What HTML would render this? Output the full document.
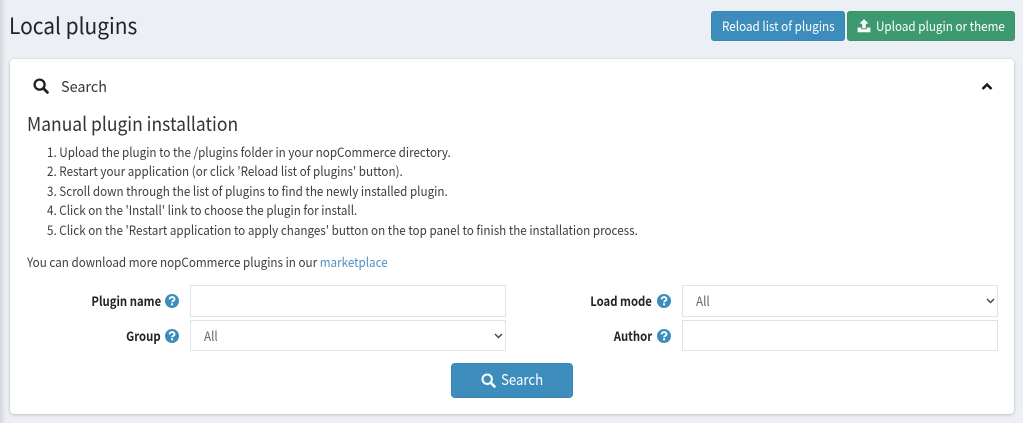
<!DOCTYPE html>
<html>
<head>
<meta charset="utf-8">
<style>
*{box-sizing:border-box;margin:0;padding:0}
html,body{width:1023px;height:423px;overflow:hidden}
body{position:relative;background:#ecf0f5;font-family:"Noto Sans CJK SC","Liberation Sans",sans-serif;color:#212529}
.shade{position:absolute;left:0;top:0;width:6px;height:423px;background:linear-gradient(to right,#d3d6da,#ecf0f5)}
.t{position:absolute;white-space:nowrap;line-height:20px;transform-origin:0 50%}
.btn{position:absolute;border-radius:3px;color:#fff;font-size:13px;line-height:20px;white-space:nowrap}
.btn span{display:inline-block;transform:scaleX(.898);transform-origin:0 50%}
.card{position:absolute;left:10px;top:59px;width:1004px;height:355px;background:#fff;border-radius:4px;box-shadow:0 0 1px rgba(0,0,0,.125),0 1px 3px rgba(0,0,0,.2)}
.f{position:absolute;background:#fff;border:1px solid #dfe2e8;height:32px}
.v{position:absolute;left:13px;top:5px;font-size:13px;line-height:20px;color:#60666c;transform:scaleX(.9);transform-origin:0 50%}
.lb{position:absolute;font-size:13px;font-weight:700;line-height:20px;text-align:right;white-space:nowrap;color:#212529;transform:scaleX(.87);transform-origin:100% 50%}
svg{position:absolute;display:block}
a{color:#3c8dbc;text-decoration:none}
.li{font-size:13px;color:#3a3f44;transform:scaleX(.896)}
</style>
</head>
<body>
<div class="shade"></div>
<div class="t" style="left:9px;top:10px;font-size:22.5px;line-height:30px;color:#212529;transform:scaleX(.93)">Local plugins</div>

<div class="btn" style="left:711px;top:11px;width:134px;height:30px;background:#3c8dbc;border:1px solid #3a87b5;padding:4px 0 0 10px"><span>Reload list of plugins</span></div>
<div class="btn" style="left:847px;top:11px;width:168px;height:30px;background:#3d9970;border:1px solid #3a9269;padding:4px 0 0 28px"><span>Upload plugin or theme</span>
<svg style="left:9px;top:7px" width="14" height="14" viewBox="0 0 14 14"><path fill="#fff" d="M7 0L11.5 4.6H8.8V9.2H5.2V4.6H2.5Z"/><path fill="#fff" d="M0.6 8.6H4.2V10.3H9.800V8.6H13.4V13.2H0.6Z"/></svg></div>

<div class="card"></div>

<svg style="left:33px;top:78px" width="16" height="16" viewBox="0 0 16 16"><circle cx="6.6" cy="6.6" r="5" fill="none" stroke="#1d2125" stroke-width="2.3"/><path d="M10.4 10.4L14.4 14.4" stroke="#1d2125" stroke-width="2.8" stroke-linecap="round"/></svg>
<div class="t" style="left:61px;top:77px;font-size:15px;color:#33383d;transform:scaleX(.96)">Search</div>
<svg style="left:981px;top:82px" width="12" height="9" viewBox="0 0 12 9"><path d="M1.5 7L6 2.5L10.500 7" fill="none" stroke="#15191d" stroke-width="2.5"/></svg>

<div class="t" style="left:26.500px;top:111px;font-size:19px;line-height:26px;color:#2f3439;transform:scaleX(.92)">Manual plugin installation</div>

<div class="t li" style="left:47px;top:142px">1. Upload the plugin to the /plugins folder in your nopCommerce directory.</div>
<div class="t li" style="left:47px;top:161px">2. Restart your application (or click 'Reload list of plugins' button).</div>
<div class="t li" style="left:47px;top:181px">3. Scroll down through the list of plugins to find the newly installed plugin.</div>
<div class="t li" style="left:47px;top:200px">4. Click on the 'Install' link to choose the plugin for install.</div>
<div class="t li" style="left:47px;top:220px">5. Click on the 'Restart application to apply changes' button on the top panel to finish the installation process.</div>
<div class="t li" style="left:27px;top:252px">You can download more nopCommerce plugins in our <a href="#" style="color:#4f93c4">marketplace</a></div>

<div class="lb" style="right:862px;top:291px">Plugin name</div>
<svg style="left:165px;top:294px" width="14" height="14" viewBox="0 0 14 14"><circle cx="7" cy="7" r="7" fill="#3c8dbc"/><path d="M4.600 5.400C4.600 4 5.700 3.100 7.100 3.100C8.500 3.100 9.500 4 9.500 5.200C9.500 6.800 7.100 6.800 7.100 8.300" fill="none" stroke="#fff" stroke-width="1.900"/><rect x="6.100" y="9.300" width="2" height="2" fill="#fff"/></svg>
<div class="f" style="left:190px;top:285px;width:316px"></div>

<div class="lb" style="right:862px;top:326px">Group</div>
<svg style="left:165px;top:329px" width="14" height="14" viewBox="0 0 14 14"><circle cx="7" cy="7" r="7" fill="#3c8dbc"/><path d="M4.600 5.400C4.600 4 5.700 3.100 7.100 3.100C8.500 3.100 9.500 4 9.500 5.200C9.500 6.800 7.100 6.800 7.100 8.300" fill="none" stroke="#fff" stroke-width="1.900"/><rect x="6.100" y="9.300" width="2" height="2" fill="#fff"/></svg>
<div class="f" style="left:190px;top:320px;width:316px;height:31px"><span class="v">All</span>
<svg style="left:303px;top:12px" width="9" height="6" viewBox="0 0 9 6"><path d="M1 1L4.500 4.500L8 1" fill="none" stroke="#3d4248" stroke-width="1.400"/></svg></div>

<div class="lb" style="right:371px;top:291px">Load mode</div>
<svg style="left:657px;top:294px" width="14" height="14" viewBox="0 0 14 14"><circle cx="7" cy="7" r="7" fill="#3c8dbc"/><path d="M4.600 5.400C4.600 4 5.700 3.100 7.100 3.100C8.500 3.100 9.500 4 9.500 5.200C9.500 6.800 7.100 6.800 7.100 8.300" fill="none" stroke="#fff" stroke-width="1.900"/><rect x="6.100" y="9.300" width="2" height="2" fill="#fff"/></svg>
<div class="f" style="left:682px;top:285px;width:316px"><span class="v">All</span>
<svg style="left:303px;top:12px" width="9" height="6" viewBox="0 0 9 6"><path d="M1 1L4.500 4.500L8 1" fill="none" stroke="#3d4248" stroke-width="1.400"/></svg></div>

<div class="lb" style="right:371px;top:326px">Author</div>
<svg style="left:657px;top:329px" width="14" height="14" viewBox="0 0 14 14"><circle cx="7" cy="7" r="7" fill="#3c8dbc"/><path d="M4.600 5.400C4.600 4 5.700 3.100 7.100 3.100C8.500 3.100 9.500 4 9.500 5.200C9.500 6.800 7.100 6.800 7.100 8.300" fill="none" stroke="#fff" stroke-width="1.900"/><rect x="6.100" y="9.300" width="2" height="2" fill="#fff"/></svg>
<div class="f" style="left:682px;top:320px;width:316px;height:31px"></div>

<div class="btn" style="left:451px;top:363px;width:122px;height:35px;background:#3c8dbc;border:1px solid #3a87b5;border-radius:4px;font-size:15px;padding:6px 0 0 49px"><span style="transform:scaleX(.88)">Search</span>
<svg style="left:29px;top:9px" width="15" height="15" viewBox="0 0 15 15"><circle cx="6.200" cy="6.200" r="4.700" fill="none" stroke="#fff" stroke-width="2"/><path d="M9.800 9.800L13.500 13.500" stroke="#fff" stroke-width="2.500" stroke-linecap="round"/></svg></div>
</body>
</html>
